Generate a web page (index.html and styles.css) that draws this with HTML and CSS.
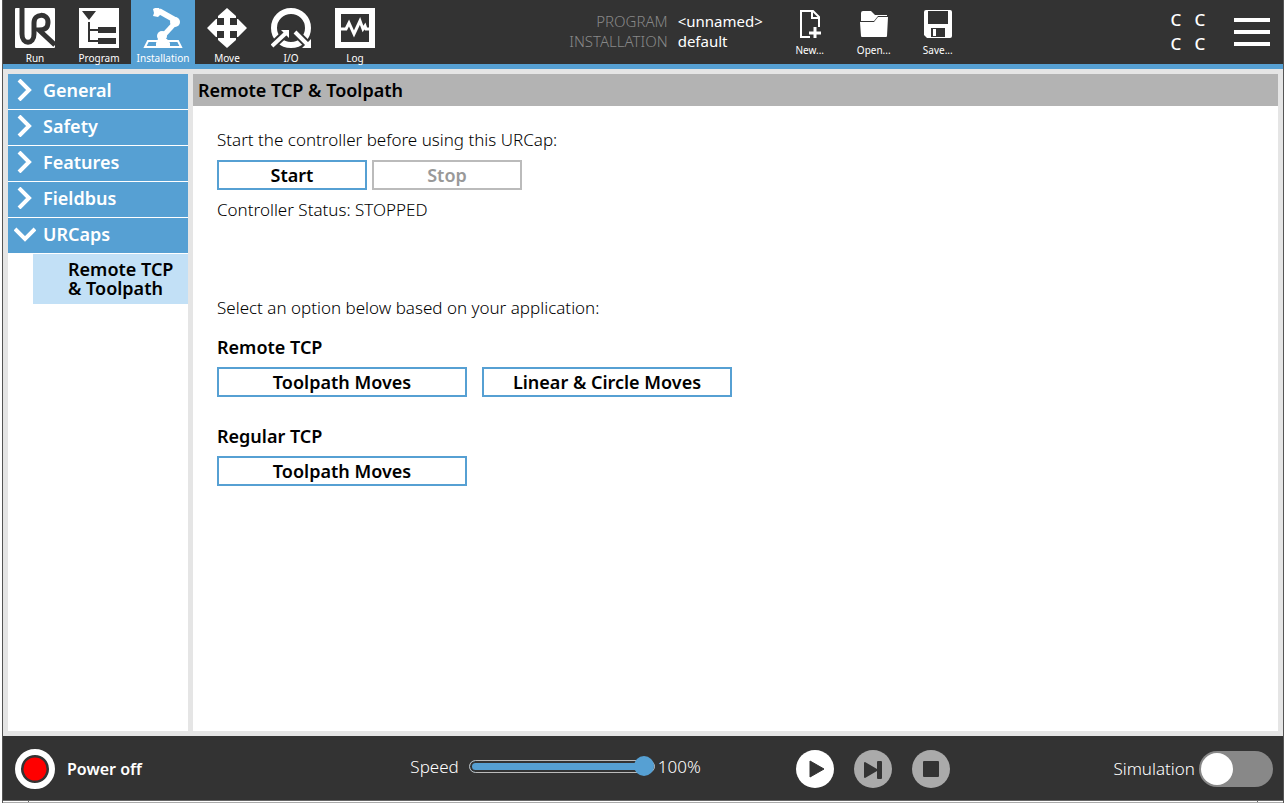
FILE: index.html
```html
<!DOCTYPE html>
<html lang="en">
<head>
  <meta charset="UTF-8">
  <title>Remote TCP &amp; Toolpath</title>
  <link rel="stylesheet" href="styles.css">
</head>
<body>

  <header class="topbar">
    <nav class="tabs">
      <button class="tab">
        <svg width="40" height="40" viewBox="0 0 40 40">
          <rect width="40" height="40" rx="1" fill="#fff"/>
          <path d="M7 0V26C7 37 19 37 19 26V15C19 5 33 5 33 14C33 20 30 22 24 22L40 37" fill="none" stroke="#333" stroke-width="5"/>
        </svg>
        <span>Run</span>
      </button>
      <button class="tab">
        <svg width="40" height="40" viewBox="0 0 40 40">
          <rect width="40" height="40" fill="#fff"/>
          <path d="M3 3H17L10 12ZM19 19H37V25H19ZM19 30H37V36H19Z" fill="#333"/>
          <path d="M10 14V33H19M10 22H19" fill="none" stroke="#333" stroke-width="2"/>
        </svg>
        <span>Program</span>
      </button>
      <button class="tab active">
        <svg width="40" height="40" viewBox="0 0 40 40">
          <path d="M5 33H35L38 39H2Z" fill="none" stroke="#fff" stroke-width="2"/>
          <path d="M13 38V35L15 31H24L27 35V38Z" fill="#fff"/>
          <path d="M16 3L32 12" stroke="#fff" stroke-width="6"/>
          <path d="M32 15L20 28" stroke="#fff" stroke-width="5"/>
          <path d="M10 1L12 0H16L18 3L17 7L15 9L10 8L11 5Z" fill="#fff"/>
          <circle cx="32" cy="14" r="5" fill="#fff"/>
          <circle cx="19" cy="28" r="5" fill="#fff"/>
        </svg>
        <span>Installation</span>
      </button>
      <button class="tab">
        <svg width="40" height="40" viewBox="0 0 40 40">
          <path d="M20 0L29 8V10H23V17H30V11H31L40 20L31 29H30V23H23V30H29V32L20 40L11 32V30H17V23H10V29H9L0 20L9 11H10V17H17V10H11V8Z" fill="#fff"/>
        </svg>
        <span>Move</span>
      </button>
      <button class="tab">
        <svg width="40" height="40" viewBox="0 0 40 40">
          <circle cx="20" cy="20" r="17" fill="none" stroke="#fff" stroke-width="6"/>
          <path d="M1 38L17 23M23 23L38 38" stroke="#333" stroke-width="8"/>
          <path d="M1 38L15 25M24 24L36 36" stroke="#fff" stroke-width="4"/>
          <path d="M10 22H18V30ZM40 31V40H31Z" fill="#fff"/>
        </svg>
        <span>I/O</span>
      </button>
      <button class="tab">
        <svg width="40" height="40" viewBox="0 0 40 40">
          <rect x="3" y="3" width="34" height="34" fill="none" stroke="#fff" stroke-width="6"/>
          <path d="M5 21H11L14 15L19 26L25 13L28 21L30 18L31 21H36" fill="none" stroke="#fff" stroke-width="3"/>
        </svg>
        <span>Log</span>
      </button>
    </nav>

    <div class="program">
      <dl class="names">
        <dt>PROGRAM</dt><dd>&lt;unnamed&gt;</dd>
        <dt>INSTALLATION</dt><dd>default</dd>
      </dl>
      <div class="files">
        <button class="file">
          <svg width="28" height="28" viewBox="0 0 28 28">
            <path d="M14 27H5V1H17L23 7V17M16 1V8H23" fill="none" stroke="#fff" stroke-width="2"/>
            <path d="M19 17V28M13 23H25" stroke="#fff" stroke-width="3"/>
          </svg>
          <span>New...</span>
        </button>
        <button class="file">
          <svg width="28" height="28" viewBox="0 0 28 28">
            <path d="M1 11V3Q1 1 3 1H11L15 5H27V6H18L14 11ZM0 12H14L18 7H28L27 26Q27 27 26 27H2Q1 27 1 26Z" fill="#fff"/>
          </svg>
          <span>Open...</span>
        </button>
        <button class="file">
          <svg width="28" height="28" viewBox="0 0 28 28">
            <path d="M2 0H26Q28 0 28 2V26Q28 28 26 28H3L0 25V2Q0 0 2 0Z" fill="#fff"/>
            <path d="M4 1H24V14H4ZM7 18H21V27H7Z" fill="#333"/>
            <path d="M9 19H12V26H9Z" fill="#fff"/>
          </svg>
          <span>Save...</span>
        </button>
      </div>
    </div>

    <div class="corner">
      <div class="checksum"><span>C</span><span>C</span><span>C</span><span>C</span></div>
      <button class="menu" aria-label="Menu">
        <svg width="38" height="30" viewBox="0 0 38 30">
          <path d="M1 3H37M1 15H37M1 27H37" stroke="#fff" stroke-width="4"/>
        </svg>
      </button>
    </div>
  </header>

  <div class="workspace">
    <nav class="sidebar">
      <button class="group"><svg width="22" height="22" viewBox="0 0 22 22"><path d="M5 1L15 11L5 21"/></svg>General</button>
      <button class="group"><svg width="22" height="22" viewBox="0 0 22 22"><path d="M5 1L15 11L5 21"/></svg>Safety</button>
      <button class="group"><svg width="22" height="22" viewBox="0 0 22 22"><path d="M5 1L15 11L5 21"/></svg>Features</button>
      <button class="group"><svg width="22" height="22" viewBox="0 0 22 22"><path d="M5 1L15 11L5 21"/></svg>Fieldbus</button>
      <button class="group"><svg width="22" height="22" viewBox="0 0 22 22"><path d="M1 6L11 16L21 6"/></svg>URCaps</button>
      <button class="item">Remote TCP &amp; Toolpath</button>
    </nav>

    <main class="panel">
      <h1>Remote TCP &amp; Toolpath</h1>
      <div class="content">
        <section class="controller">
          <p>Start the controller before using this URCap:</p>
          <div class="row">
            <button class="btn small">Start</button>
            <button class="btn small" disabled>Stop</button>
          </div>
          <p>Controller Status: STOPPED</p>
        </section>

        <p>Select an option below based on your application:</p>

        <section class="option">
          <h2>Remote TCP</h2>
          <div class="row wide">
            <button class="btn">Toolpath Moves</button>
            <button class="btn">Linear &amp; Circle Moves</button>
          </div>
        </section>
        <section class="option">
          <h2>Regular TCP</h2>
          <div class="row wide">
            <button class="btn">Toolpath Moves</button>
          </div>
        </section>
      </div>
    </main>
  </div>

  <footer class="bottombar">
    <button class="power">
      <svg width="40" height="40" viewBox="0 0 40 40">
        <circle cx="20" cy="20" r="17" fill="none" stroke="#fff" stroke-width="6"/>
        <circle cx="20" cy="20" r="11.5" fill="#f00"/>
      </svg>
      Power off
    </button>

    <div class="playback">
      <div class="speed">
        <label for="speed">Speed</label>
        <input type="range" id="speed" min="0" max="100" value="100">
        <output for="speed">100%</output>
      </div>
      <div class="players">
        <button aria-label="Play">
          <svg width="38" height="38" viewBox="0 0 38 38">
            <circle cx="19" cy="19" r="19" fill="#fff"/>
            <path d="M14 11L28 19L14 27Z" fill="#333" stroke="#333" stroke-width="1" stroke-linejoin="round"/>
          </svg>
        </button>
        <button aria-label="Step" disabled>
          <svg width="38" height="38" viewBox="0 0 38 38">
            <circle cx="19" cy="19" r="19" fill="#aaa"/>
            <path d="M11 12L23 19V12Q23 11 24 11H27Q28 11 28 12V28Q28 29 27 29H24Q23 29 23 28V21L11 28Q10 28 10 27V13Q10 12 11 12Z" fill="#333"/>
          </svg>
        </button>
        <button aria-label="Stop" disabled>
          <svg width="38" height="38" viewBox="0 0 38 38">
            <circle cx="19" cy="19" r="19" fill="#aaa"/>
            <rect x="11" y="11" width="16" height="16" rx="1" fill="#333"/>
          </svg>
        </button>
      </div>
    </div>

    <label class="simulation">Simulation <input type="checkbox" role="switch"></label>
  </footer>
  <div class="edge"></div>

</body>
</html>
```
FILE: styles.css
```css
* {
  box-sizing: border-box;
}

body {
  margin: 0 2px;
  min-height: 100vh;
  display: flex;
  flex-direction: column;
  border-left: 1px solid #555;
  border-right: 1px solid #555;
  background: #fff;
  color: #000;
  font-family: "Noto Sans", sans-serif;
  font-size: 17px;
  font-weight: 300;
  line-height: 20px;
}

button {
  padding: 0;
  border: none;
  background: none;
  color: inherit;
  font: inherit;
  cursor: pointer;
}

svg {
  display: block;
  flex: none;
}

h1, h2, p, dl, dd {
  margin: 0;
}

/* top bar */
.topbar {
  display: flex;
  justify-content: space-between;
  background: #333;
  border-bottom: 5px solid #56a0d3;
  color: #fff;
}

.tabs, .files {
  display: flex;
}

.tab, .file {
  width: 64px;
  height: 64px;
  display: flex;
  flex-direction: column;
  align-items: center;
  padding-top: 8px;
  gap: 4px;
  font-size: 10px;
  font-weight: 400;
  line-height: 12px;
}

.file {
  padding-top: 10px;
  gap: 6px;
}

.tab.active {
  background: #56a0d3;
}

.program {
  display: flex;
  gap: 15px;
  padding-right: 12px;
}

.names {
  display: grid;
  grid-template-columns: auto auto;
  align-content: center;
  column-gap: 10px;
  padding-bottom: 2px;
  font-size: 15px;
}

.names dt {
  color: #888;
  text-align: right;
}

.names dd {
  font-weight: 400;
}

.corner {
  display: flex;
  align-items: center;
  gap: 21px;
  padding-right: 12px;
}

.checksum {
  display: grid;
  grid-template-columns: 24px 24px;
  line-height: 24px;
  font-weight: 500;
  text-align: center;
}

/* workspace */
.workspace {
  flex: 1;
  display: flex;
  gap: 5px;
  padding: 5px;
  background: #e5e5e5;
}

.sidebar {
  width: 180px;
  display: flex;
  flex-direction: column;
  gap: 1px;
  background: #fff;
}

.group {
  height: 35px;
  display: flex;
  align-items: center;
  gap: 7px;
  padding: 0 6px 3px;
  background: #56a0d3;
  color: #fff;
  font-size: 18px;
  font-weight: 600;
}

.group path {
  fill: none;
  stroke: #fff;
  stroke-width: 4;
}

.item {
  margin-left: 25px;
  padding: 6px 0 6px 35px;
  background: #c2e0f6;
  font-size: 18px;
  font-weight: 600;
  line-height: 19px;
  text-align: left;
}

.panel {
  flex: 1;
  background: #fff;
}

h1 {
  padding: 0 5px;
  background: #b3b3b3;
  font-size: 18px;
  font-weight: 600;
  line-height: 32px;
}

.content {
  padding: 24px;
}

.controller {
  margin-bottom: 78px;
}

.row {
  display: flex;
  gap: 5px;
  margin: 10px 0;
}

.row.wide {
  gap: 15px;
}

.btn {
  width: 250px;
  height: 30px;
  border: 2px solid #56a0d3;
  background: #fff;
  font-size: 18px;
  font-weight: 600;
}

.btn.small {
  width: 150px;
}

.btn:disabled {
  border-color: #bbb;
  color: #999;
  cursor: default;
}

.option {
  padding-top: 19px;
}

h2 {
  font-size: 18px;
  font-weight: 600;
  line-height: 20px;
}

/* bottom bar */
.bottombar {
  height: 64px;
  display: grid;
  grid-template-columns: 22fr 30fr 18fr;
  align-items: center;
  padding: 2px 10px 0 12px;
  background: #333;
  color: #fff;
}

.power {
  display: flex;
  align-items: center;
  gap: 12px;
  font-size: 16px;
  font-weight: 600;
}

.playback {
  display: flex;
  align-items: center;
  justify-content: space-between;
}

.speed {
  display: flex;
  align-items: center;
  padding-bottom: 5px;
}

.speed input {
  width: 186px;
  height: 20px;
  margin: 0 3px 0 10px;
  appearance: none;
  background: none;
}

.speed input::-webkit-slider-runnable-track {
  height: 13px;
  border: 1px solid #bbb;
  border-radius: 7px;
  background: #56a0d3;
  box-shadow: inset 0 0 0 2px #333;
}

.speed input::-webkit-slider-thumb {
  appearance: none;
  width: 20px;
  height: 20px;
  margin: -5px -1px 0 0;
  border-radius: 50%;
  background: #56a0d3;
}

.players {
  display: flex;
  gap: 20px;
}

.simulation {
  display: flex;
  align-items: center;
  justify-content: flex-end;
  gap: 4px;
}

.simulation input {
  appearance: none;
  width: 74px;
  height: 36px;
  margin: 0;
  padding: 2px;
  border-radius: 18px;
  background: #888;
}

.simulation input::before {
  content: "";
  display: block;
  width: 32px;
  height: 32px;
  border-radius: 50%;
  background: #fff;
}

.simulation input:checked::before {
  margin-left: auto;
}

/* window frame under the bottom bar */
.edge {
  height: 3px;
  border-top: 1px solid #666;
  border-bottom: 1px solid #aaa;
}

.edge::before {
  content: "";
  display: block;
  height: 1px;
  margin: 0 25px;
  border-left: 1px solid #666;
  border-right: 1px solid #666;
}
```
